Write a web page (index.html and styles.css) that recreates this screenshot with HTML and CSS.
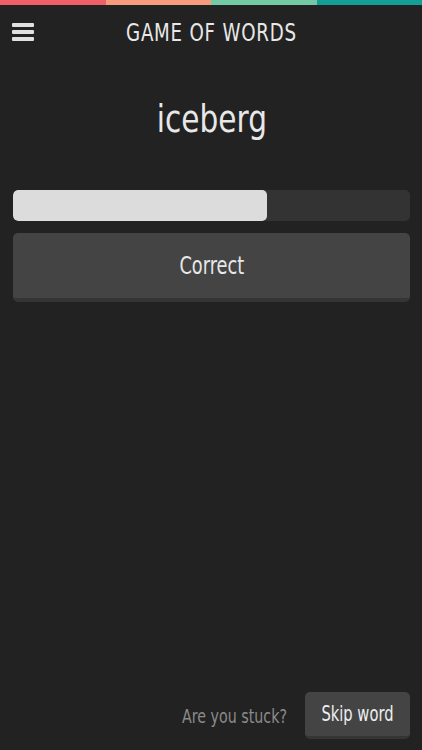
FILE: index.html
```html
<!DOCTYPE html><html lang="en">
<head>
  <meta charset="UTF-8" />
  <title>GAME OF WORDS</title>
  <link rel="stylesheet" href="styles.css">
</head>
<body>
<div class="stripe">
  <span class="red"></span><span class="salmon"></span><span class="mint"></span><span class="teal"></span>
</div>
<div class="app">
  <header class="topbar">
    <button class="menu" aria-label="menu"><span></span><span></span><span></span></button>
    <h1><span class="narrow">GAME OF WORDS</span></h1>
  </header>
  <div class="word"><span class="narrow">iceberg</span></div>
  <div class="progress"><div class="fill" style="width: 64%"></div></div>
  <button class="correct"><span class="narrow">Correct</span></button>
  <div class="footer">
    <span class="stuck narrow">Are you stuck?</span>
    <button class="skip"><span class="narrow">Skip word</span></button>
  </div>
</div>
</body>
</html>
```

FILE: styles.css
```css
* {
  margin: 0;
  padding: 0;
  box-sizing: border-box;
}
html, body {
  height: 100%;
}
body {
  background-color: #222;
  color: #e6e6e6;
  font-family: "DejaVu Sans", sans-serif;
  overflow: hidden;
  display: flex;
  flex-direction: column;
}
/* no condensed face installed, squeeze the text instead */
.narrow {
  display: inline-block;
  transform: scaleX(0.8);
  white-space: nowrap;
}
.stripe {
  display: flex;
  height: 5px;
}
.stripe span {
  flex: 1;
}
.red { background: #ef5f67; }
.salmon { background: #f89a7e; }
.mint { background: #72c9a4; }
.teal { background: #139e96; }
.app {
  flex: 1;
  display: flex;
  flex-direction: column;
  padding: 0 12px 11px 13px;
}
.topbar {
  position: relative;
  height: 55px;
  display: flex;
  align-items: center;
  justify-content: center;
}
.topbar h1 {
  font-size: 24px;
  font-weight: normal;
  letter-spacing: 1px;
  color: #e8e8e8;
}
.topbar h1 .narrow {
  transform: scaleX(0.76);
}
.menu {
  position: absolute;
  left: -1px;
  top: 18px;
  width: 22px;
  background: none;
  border: none;
  display: flex;
  flex-direction: column;
  gap: 3px;
}
.menu span {
  display: block;
  height: 4px;
  background: #e0e0e0;
  border-radius: 1px;
}
.word {
  text-align: center;
  font-size: 37px;
  margin-top: 38px;
  height: 56px;
  color: #e8e8e8;
}
.word .narrow {
  transform: scaleX(0.8);
}
.progress {
  margin-top: 36px;
  height: 31px;
  background: #333;
  border-radius: 5px;
  overflow: hidden;
}
.fill {
  height: 100%;
  background: #dcdcdc;
  border-radius: 5px;
}
button {
  font-family: inherit;
  color: #e8e8e8;
  cursor: pointer;
}
.correct {
  margin-top: 12px;
  height: 69px;
  background: #444;
  border: none;
  border-bottom: 4px solid #353535;
  border-radius: 5px;
  font-size: 24px;
}
.correct .narrow {
  transform: scaleX(0.74);
}
.footer {
  margin-top: auto;
  display: flex;
  justify-content: flex-end;
  align-items: center;
  gap: 18px;
}
.stuck {
  color: #8a8a8a;
  font-size: 19px;
  transform-origin: right center;
  transform: scaleX(0.75);
  margin-left: -40px;
}
.skip {
  width: 105px;
  height: 47px;
  background: #444;
  border: none;
  border-bottom: 3px solid #353535;
  border-radius: 5px;
  font-size: 21px;
  color: #eee;
}
.skip .narrow {
  transform: scaleX(0.7);
}
```
